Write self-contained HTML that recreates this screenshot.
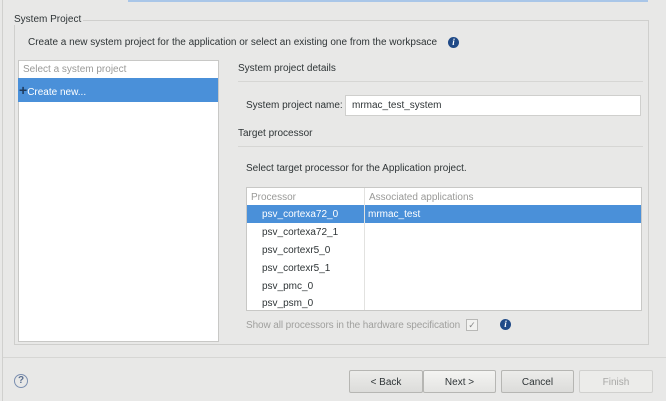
<!DOCTYPE html>
<html><head><style>
body{margin:0;width:666px;height:401px;background:#e8e8e7;font-family:"Liberation Sans","DejaVu Sans",sans-serif;font-size:10px;color:#2e3436;position:relative;overflow:hidden}
.a{position:absolute;white-space:nowrap}
.info{position:absolute;width:11px;height:11px;border-radius:50%;background:#204a87;color:#fff;font:bold italic 9px "Liberation Serif",serif;text-align:center;line-height:11px}
.btn{position:absolute;top:370px;height:23px;border:1px solid #b6b6b3;border-radius:2px;background:linear-gradient(#ececea,#dcdcda);text-align:center;line-height:23px;box-sizing:border-box}
.row{position:absolute;left:0;width:394px;height:18px;line-height:19px}
</style></head><body>
<div class="a" style="left:128px;top:0;width:520px;height:2px;background:#a9c6e8"></div>
<div class="a" style="left:2px;top:0;width:1px;height:401px;background:#d0d0ce"></div>
<div class="a" style="left:14px;top:20px;width:635px;height:325px;border:1px solid #cfcfcd;box-sizing:border-box"></div>
<div class="a" style="left:12px;top:14px;background:#e8e8e7;padding:0 2px">System Project</div>
<div class="a" style="left:28px;top:37px">Create a new system project for the application or select an existing one from the workpsace</div>
<div class="info" style="left:448px;top:37px">i</div>
<div class="a" style="left:18px;top:60px;width:201px;height:282px;background:#fff;border:1px solid #c8c8c6;box-sizing:border-box"></div>
<div class="a" style="left:23px;top:64px;color:#9a9a98">Select a system project</div>
<div class="a" style="left:18px;top:78px;width:200px;height:24px;background:#4a90d9"></div>
<div class="a" style="left:19px;top:85px;color:#fff"><span style="color:#1e3a5a;font-weight:bold;font-size:14px;line-height:10px">+</span>Create new...</div>
<div class="a" style="left:238px;top:63px">System project details</div>
<div class="a" style="left:238px;top:81px;width:405px;height:1px;background:#d6d6d4"></div>
<div class="a" style="left:246px;top:100px">System project name:</div>
<div class="a" style="left:345px;top:95px;width:296px;height:21px;background:#fff;border:1px solid #cfcfcd;box-sizing:border-box;padding-left:6px;line-height:20px">mrmac_test_system</div>
<div class="a" style="left:238px;top:128px">Target processor</div>
<div class="a" style="left:238px;top:146px;width:405px;height:1px;background:#d6d6d4"></div>
<div class="a" style="left:246px;top:163px">Select target processor for the Application project.</div>
<div class="a" style="left:246px;top:187px;width:396px;height:124px;background:#fff;border:1px solid #c8c8c6;box-sizing:border-box">
 <div class="row" style="top:0;color:#9a9a98"><span class="a" style="left:4px">Processor</span><span class="a" style="left:122px">Associated applications</span></div>
 <div class="a" style="left:0;top:17px;width:394px;height:1px;background:#e2e2e0"></div>
 <div class="row" style="top:17px;background:#4a90d9;color:#fff"><span class="a" style="left:15px">psv_cortexa72_0</span><span class="a" style="left:121px">mrmac_test</span></div>
 <div class="row" style="top:35px"><span class="a" style="left:15px">psv_cortexa72_1</span></div>
 <div class="row" style="top:53px"><span class="a" style="left:15px">psv_cortexr5_0</span></div>
 <div class="row" style="top:71px"><span class="a" style="left:15px">psv_cortexr5_1</span></div>
 <div class="row" style="top:89px"><span class="a" style="left:15px">psv_pmc_0</span></div>
 <div class="row" style="top:106px"><span class="a" style="left:15px">psv_psm_0</span></div>
 <div class="a" style="left:117px;top:0;width:1px;height:122px;background:#e2e2e0"></div>
</div>
<div class="a" style="left:246px;top:320px;color:#a0a09e;letter-spacing:-0.1px">Show all processors in the hardware specification</div>
<div class="a" style="left:466px;top:319px;width:10px;height:10px;border:1px solid #b8b8b6;background:#f2f2f0;font-size:9px;line-height:10px;text-align:center;color:#888">✓</div>
<div class="info" style="left:500px;top:319px">i</div>
<div class="a" style="left:3px;top:357px;width:663px;height:1px;background:#d6d6d4"></div>
<div class="a" style="left:14px;top:374px;width:12px;height:12px;border:1px solid #7b8fb0;border-radius:50%;text-align:center;line-height:12px;font-size:10px;color:#5a6f90;font-weight:bold">?</div>
<div class="btn" style="left:349px;width:74px">&lt; Back</div>
<div class="btn" style="left:423px;width:73px;background:linear-gradient(#f4f4f2,#e4e4e2)">Next &gt;</div>
<div class="btn" style="left:501px;width:73px">Cancel</div>
<div class="btn" style="left:579px;width:74px;color:#a8a8a6;background:#ececea;border-color:#d0d0ce">Finish</div>
</body></html>
